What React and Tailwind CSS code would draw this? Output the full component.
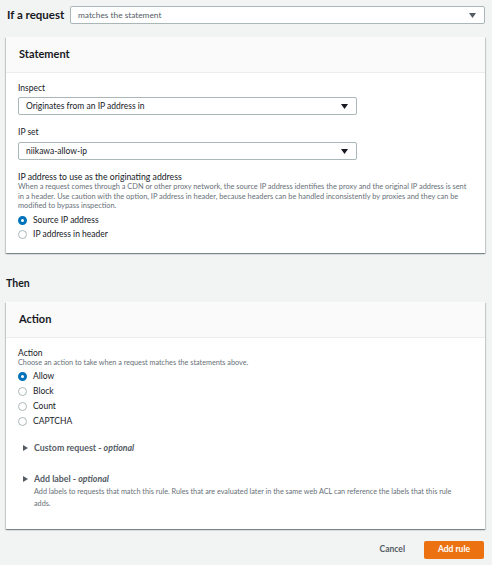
import React from "react";

const font = { fontFamily: "Lato, 'Noto Sans', 'Liberation Sans', sans-serif" };

function Caret({ dark }) {
  return (
    <svg width="7" height="5" viewBox="0 0 7 5" className="shrink-0">
      <path d="M0 0h7L3.5 5z" fill={dark ? "#16191f" : "#545b64"} />
    </svg>
  );
}

function Select({ value, className = "", small, dark }) {
  return (
    <div
      className={`flex h-[18px] items-center justify-between rounded-[2px] border border-[#aab7b8] bg-white pl-[7px] pr-[8px] ${className}`}
    >
      <span className={small ? "text-[8.3px] text-[#545b64]" : "text-[8.5px] text-[#16191f]"}>{value}</span>
      <Caret dark={dark} />
    </div>
  );
}

function Radio({ label, checked, rowClass }) {
  return (
    <div className={`flex items-center ${rowClass}`}>
      {checked ? (
        <span className="box-border h-[9px] w-[9px] rounded-full border-[3px] border-[#0073bb] bg-white" />
      ) : (
        <span className="box-border h-[9px] w-[9px] rounded-full border border-[#aab7b8] bg-white" />
      )}
      <span className="ml-[6px] text-[8.5px] text-[#16191f]">{label}</span>
    </div>
  );
}

function Card({ title, children, className = "" }) {
  return (
    <div
      className={`bg-white shadow-[0_1px_1px_0_rgba(0,28,36,0.3),1px_1px_1px_0_rgba(0,28,36,0.15),-1px_1px_1px_0_rgba(0,28,36,0.15)] ${className}`}
    >
      <div className="flex h-[36px] items-center border-b border-[#eaeded] bg-[#fafafa] px-[13px]">
        <h2 className="text-[11px] font-bold text-[#16191f]">{title}</h2>
      </div>
      {children}
    </div>
  );
}

function Expander({ title, className = "" }) {
  return (
    <div className={`flex h-[14px] items-center pl-[5px] ${className}`}>
      <svg width="5" height="6" viewBox="0 0 5 6">
        <path d="M0 0l5 3-5 3z" fill="#545b64" />
      </svg>
      <span className="ml-[6px] text-[8.8px] font-bold text-[#545b64]">
        {title} - <i className="font-bold">optional</i>
      </span>
    </div>
  );
}

export default function App() {
  return (
    <div className="min-h-screen w-[492px] bg-[#f2f3f3] pl-[6px] pr-[7px] pt-[6px]" style={font}>
      {/* if a request */}
      <div className="flex h-[18px] items-center">
        <span className="w-[64px] pl-[1px] text-[11.5px] font-bold text-[#16191f]">If a request</span>
        <Select value="matches the statement" small className="flex-1" />
      </div>

      {/* statement */}
      <Card title="Statement" className="mt-[13px]">
        <div className="px-[12px] pb-[11px] pt-[9px]">
          <div className="text-[8.5px] leading-[12px] text-[#16191f]">Inspect</div>
          <Select value="Originates from an IP address in" dark className="mt-[3px] w-[339px]" />

          <div className="mt-[11px] text-[8.5px] leading-[12px] text-[#16191f]">IP set</div>
          <Select value="niikawa-allow-ip" dark className="mt-[4px] w-[339px]" />

          <div className="mt-[12px] text-[8.7px] leading-[10px] text-[#16191f]">
            IP address to use as the originating address
          </div>
          <p className="pr-[4px] text-[7.4px] leading-[9.5px] text-[#687078]">
            When a request comes through a CDN or other proxy network, the source IP address identifies the proxy and
            the original IP address is sent in a header. Use caution with the option, IP address in header, because
            headers can be handled inconsistently by proxies and they can be modified to bypass inspection.
          </p>
          <div className="mt-[3px]">
            <Radio label="Source IP address" checked rowClass="h-[14px]" />
            <Radio label="IP address in header" rowClass="h-[14px]" />
          </div>
        </div>
      </Card>

      <h3 className="mt-[23px] text-[10.5px] font-bold leading-[14px] text-[#16191f]">Then</h3>

      {/* action */}
      <Card title="Action" className="mt-[12px]">
        <div className="px-[12px] pb-[19px] pt-[10px]">
          <div className="text-[8.5px] leading-[10px] text-[#16191f]">Action</div>
          <p className="text-[7.25px] leading-[9px] text-[#687078]">
            Choose an action to take when a request matches the statements above.
          </p>
          <div className="mt-[2px]">
            <Radio label="Allow" checked rowClass="h-[15px]" />
            <Radio label="Block" rowClass="h-[15px]" />
            <Radio label="Count" rowClass="h-[15px]" />
            <Radio label="CAPTCHA" rowClass="h-[15px]" />
          </div>

          <Expander title="Custom request" className="mt-[12px]" />
          <Expander title="Add label" className="mt-[17px]" />
          <p className="pl-[16px] pr-[20px] text-[7.25px] leading-[12px] text-[#687078]">
            Add labels to requests that match this rule. Rules that are evaluated later in the same web ACL can
            reference the labels that this rule adds.
          </p>
        </div>
      </Card>

      {/* footer */}
      <div className="mt-[12px] flex items-center justify-end pr-[1px]">
        <button className="text-[8.5px] font-bold text-[#545b64]">Cancel</button>
        <button className="ml-[19px] h-[18px] w-[60px] rounded-[2px] bg-[#ec7211] text-[8.5px] font-bold text-white">
          Add rule
        </button>
      </div>
    </div>
  );
}
